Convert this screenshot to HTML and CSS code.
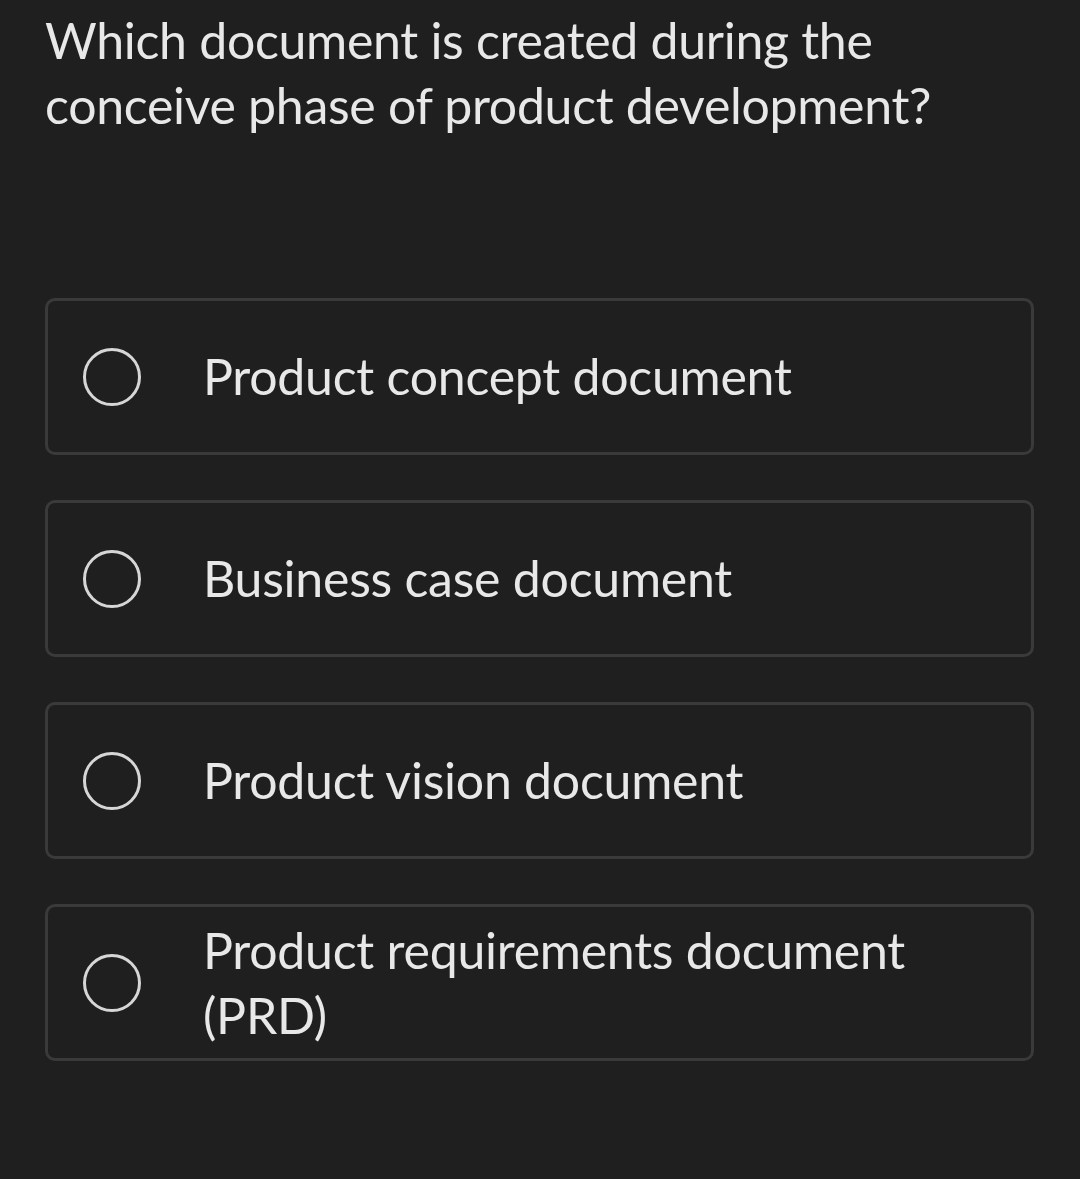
FILE: index.html
```html
<!DOCTYPE html>
<html lang="en">
<head>
    <meta charset="UTF-8">
    <meta name="viewport" content="width=device-width, initial-scale=1.0">
    <title>Quiz</title>
    <link rel="stylesheet" href="styles.css">
</head>
<body>

    <section class="quiz">
        <h1 class="question">Which document is created during the conceive phase of product development?</h1>

        <div class="options">
            <label class="option">
                <span class="radio"></span>
                <span class="label">Product concept document</span>
            </label>
            <label class="option">
                <span class="radio"></span>
                <span class="label">Business case document</span>
            </label>
            <label class="option">
                <span class="radio"></span>
                <span class="label">Product vision document</span>
            </label>
            <label class="option">
                <span class="radio"></span>
                <span class="label">Product requirements document (PRD)</span>
            </label>
        </div>
    </section>

</body>
</html>
```

FILE: styles.css
```css
body{
    margin: 0;
    background-color: #1f1f1f;
    color: #e8e8e8;
    font-family: Lato, "Noto Sans", sans-serif;
}

.quiz{
    padding: 8px 46px 0 45px;
}

.question{
    margin: 0;
    width: 900px;
    font-size: 50px;
    font-weight: normal;
    line-height: 65px;
    letter-spacing: -0.3px;
}

.options{
    margin-top: 160px;
    display: flex;
    flex-direction: column;
    gap: 45px;
}

.option{
    box-sizing: border-box;
    min-height: 157px;
    display: flex;
    align-items: center;
    gap: 62px;
    padding: 0 80px 0 35px;
    border: 3px solid #3a3a3a;
    border-radius: 10px;
}

.radio{
    flex: none;
    box-sizing: border-box;
    width: 58px;
    height: 58px;
    border: 3px solid #d6d6d6;
    border-radius: 50%;
}

.label{
    font-size: 50px;
    line-height: 65px;
    letter-spacing: -0.25px;
}
```
